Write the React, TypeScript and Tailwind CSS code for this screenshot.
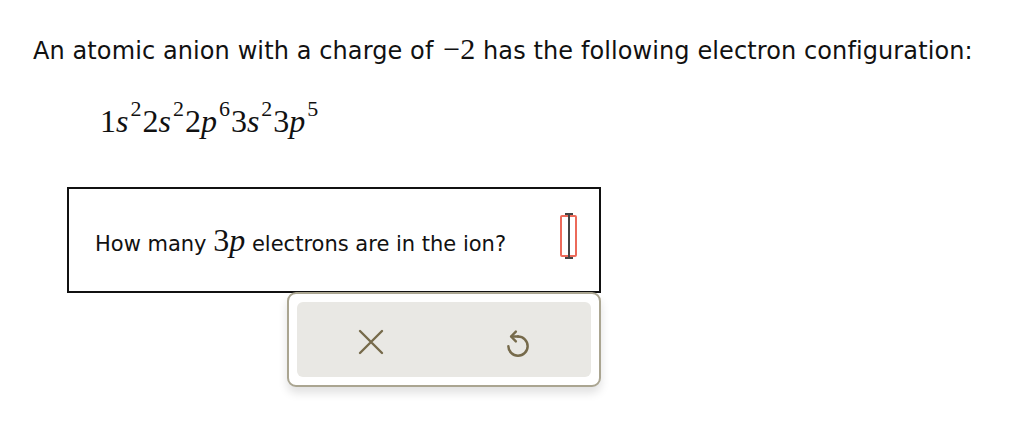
const sans = { fontFamily: '"DejaVu Sans", Verdana, sans-serif' };
const serif = { fontFamily: '"Liberation Serif", "Times New Roman", serif' };

// one orbital term, e.g. 2p^6
function Term({ n, l, e }: { n: string; l: string; e: string }) {
  return (
    <span>
      {n}
      <i>{l}</i>
      <sup className="text-[22px] relative -top-[16px] ml-[2px] mr-[1px]">{e}</sup>
    </span>
  );
}

function CloseIcon() {
  return (
    <svg width="26" height="26" viewBox="0 0 26 26" fill="none" stroke="#766a4b" strokeWidth="2.4" strokeLinecap="round">
      <path d="M2 2L24 24M24 2L2 24" />
    </svg>
  );
}

function UndoIcon() {
  return (
    <svg width="28" height="30" viewBox="0 0 26 28" fill="none" stroke="#766a4b" strokeWidth="2.3" strokeLinecap="round" strokeLinejoin="round">
      <path d="M13 7A9 9 0 1 1 4 16" />
      <path d="M13 7H7" />
      <path d="M11 2.5L6.5 7L11 11.5" />
    </svg>
  );
}

export default function App() {
  return (
    <div className="bg-white w-[1024px] h-[435px] overflow-hidden pt-[32px] pl-[33px] text-[#111]">
      <p className="h-[34px] text-[24px] leading-[34px] tracking-[0.1px] whitespace-nowrap" style={sans}>
        An atomic anion with a charge of{" "}
        <span className="text-[30px] leading-[34px] ml-[2px]" style={serif}>
          −2
        </span>{" "}
        has the following electron configuration:
      </p>

      <div className="h-[38px] ml-[67px] mt-[36px] text-[32px] leading-[38px]" style={serif}>
        <Term n="1" l="s" e="2" />
        <Term n="2" l="s" e="2" />
        <Term n="2" l="p" e="6" />
        <Term n="3" l="s" e="2" />
        <Term n="3" l="p" e="5" />
      </div>

      <div className="ml-[34px] mt-[47px] w-[534px] h-[106px] border-2 border-[#111] flex items-center pl-[26px] pr-[22px]">
        <p className="text-[21px] flex-1" style={sans}>
          How many{" "}
          <span className="text-[32px]" style={serif}>
            3<i>p</i>
          </span>{" "}
          electrons are in the ion?
        </p>
        {/* empty answer field */}
        <div className="relative w-[17px] h-[42px] border-2 border-[#ec6a5a] rounded-[2px] mb-[8px]">
          <div className="absolute left-1/2 -translate-x-1/2 -top-[4px] -bottom-[4px] w-[2px] bg-[#444]" />
          <div className="absolute left-1/2 -translate-x-1/2 -top-[4px] w-[8px] h-[2px] bg-[#444]" />
          <div className="absolute left-1/2 -translate-x-1/2 -bottom-[4px] w-[8px] h-[2px] bg-[#444]" />
        </div>
      </div>

      <div className="ml-[254px] -mt-[1px] w-[314px] h-[95px] border-2 border-[#aaa591] rounded-[9px] bg-white p-[8px] shadow-[0_6px_10px_rgba(0,0,0,0.12)]">
        <div className="h-full bg-[#e9e8e4] rounded-[6px] flex items-center pt-[5px]">
          <div className="flex-1 flex justify-center">
            <CloseIcon />
          </div>
          <div className="flex-1 flex justify-center pt-[4px]">
            <UndoIcon />
          </div>
        </div>
      </div>
    </div>
  );
}
